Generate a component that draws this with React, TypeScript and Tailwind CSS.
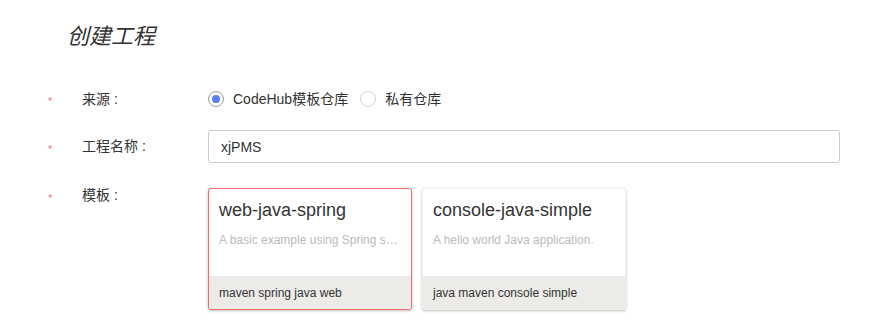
const font = { fontFamily: '"Liberation Sans", "Noto Sans CJK SC", sans-serif' };

const templates = [
  {
    name: "web-java-spring",
    desc: "A basic example using Spring s…",
    tags: "maven spring java web",
    selected: true,
  },
  {
    name: "console-java-simple",
    desc: "A hello world Java application.",
    tags: "java maven console simple",
    selected: false,
  },
];

function Label({ text }: { text: string }) {
  return (
    <div className="flex w-[160px] shrink-0 items-center">
      <span className="w-[34px] pt-[5px] text-[11px] leading-none text-[#f07575]">*</span>
      <span className="text-[14px] text-[#333]">{text}</span>
    </div>
  );
}

function Radio({ checked, label }: { checked: boolean; label: string }) {
  return (
    <label className="flex items-center gap-[9px]">
      <span
        className={
          checked
            ? "flex h-[16px] w-[16px] items-center justify-center rounded-full border border-[#9a9a9a] bg-white"
            : "flex h-[16px] w-[16px] items-center justify-center rounded-full border border-[#d4d4d4] bg-white"
        }
      >
        {checked && <span className="h-[8px] w-[8px] rounded-full bg-[#5d7ef2]" />}
      </span>
      <span className="text-[14px] text-[#333]">{label}</span>
    </label>
  );
}

export default function App() {
  return (
    <div className="h-[325px] w-[892px] bg-white" style={font}>
      <div className="pl-[48px]">
        {/* 标题 */}
        <h1 className="pl-[19px] pt-[22px] text-[22px] italic leading-[30px] text-[#333]">创建工程</h1>

        {/* 来源 */}
        <div className="mt-[35px] flex h-[24px] items-center">
          <Label text="来源 :" />
          <div className="flex items-center gap-[12px]">
            <Radio checked label="CodeHub模板仓库" />
            <Radio checked={false} label="私有仓库" />
          </div>
        </div>

        {/* 工程名称 */}
        <div className="mt-[19px] flex items-center">
          <Label text="工程名称 :" />
          <input
            className="h-[33px] w-[632px] rounded-[3px] border border-[#cccccc] px-[12px] text-[14px] text-[#333] outline-none"
            style={font}
            defaultValue="xjPMS"
          />
        </div>

        {/* 模板 */}
        <div className="mt-[25px] flex items-start">
          <div className="-mt-[3px]">
            <Label text="模板 :" />
          </div>
          <div className="flex gap-[10px]">
            {templates.map((t) => (
              <div
                key={t.name}
                className={
                  t.selected
                    ? "flex h-[122px] w-[204px] flex-col overflow-hidden rounded-[3px] border border-[#f26a6a] bg-white shadow-[0_1px_3px_rgba(0,0,0,0.25)]"
                    : "flex h-[122px] w-[204px] flex-col overflow-hidden rounded-[3px] border border-[#f0f0f0] bg-white shadow-[0_1px_3px_rgba(0,0,0,0.25)]"
                }
              >
                <div className="flex-1 px-[10px] pt-[9px]">
                  <div className="text-[18px] leading-[24px] text-[#333]">{t.name}</div>
                  <div className="mt-[10px] truncate text-[12px] leading-[16px] text-[#bbbbbb]">{t.desc}</div>
                </div>
                <div className="flex h-[33px] items-center bg-[#ecebe8] px-[10px] text-[12px] text-[#333]">
                  {t.tags}
                </div>
              </div>
            ))}
          </div>
        </div>
      </div>
    </div>
  );
}
